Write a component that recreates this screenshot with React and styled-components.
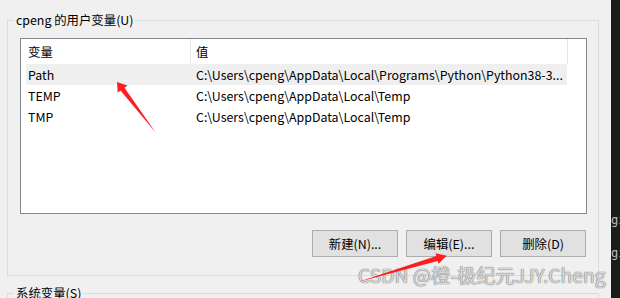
import React from 'react';
import styled, { createGlobalStyle } from 'styled-components';

const GlobalStyle = createGlobalStyle`
  html, body {
    margin: 0;
    padding: 0;
    background: #f0f0f0;
  }
  body {
    font-family: "Noto Sans CJK SC", "Noto Sans", sans-serif;
    font-size: 12.4px;
    color: #000;
  }
`;

const userVars = [
  { name: 'Path', value: 'C:\\Users\\cpeng\\AppData\\Local\\Programs\\Python\\Python38-3...', selected: true },
  { name: 'TEMP', value: 'C:\\Users\\cpeng\\AppData\\Local\\Temp' },
  { name: 'TMP', value: 'C:\\Users\\cpeng\\AppData\\Local\\Temp' },
];

const App = () => (
  <>
    <GlobalStyle />
    <Screen>
      <Dialog>
        <Group>
          <Legend>cpeng 的用户变量(U)</Legend>
          <GroupBody>
            <ListBox>
              <HeaderRow>
                <HeaderCell $first>变量</HeaderCell>
                <HeaderCell>值</HeaderCell>
              </HeaderRow>
              {userVars.map(v => (
                <Row key={v.name} $selected={v.selected}>
                  <NameCell>{v.name}</NameCell>
                  <ValueCell>{v.value}</ValueCell>
                </Row>
              ))}
            </ListBox>
            <ButtonRow>
              <Button>新建(N)...</Button>
              <Button>编辑(E)...</Button>
              <Button>删除(D)</Button>
            </ButtonRow>
          </GroupBody>
        </Group>
        <Group $second>
          <Legend>系统变量(S)</Legend>
        </Group>
      </Dialog>
      <Terminal>
        <TermLine>gi</TermLine>
        <TermLine>gi</TermLine>
      </Terminal>

      <Watermark>CSDN @橙-极纪元JJY.Cheng</Watermark>

      <Annotations width="620" height="298" viewBox="0 0 620 298">
        <polygon
          fill="#ff1e1e"
          points="117,82 127.5,85.5 124.5,87.8 156,133 120.5,90.6 117.7,92.8"
        />
        <polygon
          fill="#ff1e1e"
          points="446.7,255.7 438.5,263.8 437.7,260.9 358,282 436.3,256.1 435.5,253.2"
        />
      </Annotations>
    </Screen>
  </>
);

const Screen = styled.div`
  position: relative;
  display: flex;
  width: 620px;
  height: 298px;
  overflow: hidden;
`;

const Dialog = styled.div`
  flex: 1;
  display: flex;
  flex-direction: column;
`;

const Group = styled.fieldset`
  box-sizing: border-box;
  width: 592px;
  margin: ${props => (props.$second ? '9px' : '12px')} 0 0 7px;
  padding: 0;
  border: 1px solid #dcdcdc;
  min-width: 0;
  flex-shrink: 0;
  height: ${props => (props.$second ? '40px' : 'auto')};
`;

const Legend = styled.legend`
  margin-left: 6px;
  padding: 0 2px;
  font-size: 12.4px;
  line-height: 16px;
  color: #000;
`;

const GroupBody = styled.div`
  padding: 10px 11px 18px 12px;
`;

const ListBox = styled.div`
  box-sizing: border-box;
  height: 176px;
  border: 1px solid #828790;
  background: #fff;
`;

const HeaderRow = styled.div`
  display: flex;
  height: 25px;
`;

const HeaderCell = styled.div`
  box-sizing: border-box;
  width: ${props => (props.$first ? '170px' : '377px')};
  padding-left: ${props => (props.$first ? '7px' : '5px')};
  border-right: 1px solid #e5e5e5;
  display: flex;
  align-items: center;
  line-height: 16px;
`;

const Row = styled.div`
  display: flex;
  align-items: center;
  height: 21px;
  width: 541px;
  margin-left: 5px;
  background: ${props => (props.$selected ? '#efefef' : 'transparent')};
  white-space: nowrap;
`;

const NameCell = styled.div`
  width: 164px;
  padding-left: 2px;
  box-sizing: border-box;
`;

const ValueCell = styled.div`
  flex: 1;
  padding-left: 6px;
  overflow: hidden;
`;

const ButtonRow = styled.div`
  display: flex;
  justify-content: flex-end;
  gap: 8px;
  margin: 16px 1px 0 0;
`;

const Button = styled.button`
  box-sizing: border-box;
  width: 86px;
  height: 27px;
  padding: 0;
  background: #e1e1e1;
  border: 1px solid #adadad;
  font-family: "Noto Sans CJK SC", "Noto Sans", sans-serif;
  font-size: 12.4px;
  color: #000;
`;

const Terminal = styled.div`
  width: 9px;
  background: #1c1c1c;
  overflow: hidden;
  padding-top: 212px;
  box-sizing: border-box;
`;

const TermLine = styled.div`
  font-family: "DejaVu Sans Mono", monospace;
  font-size: 12px;
  line-height: 16px;
  color: #bdbdbd;
  margin-bottom: 17px;
  white-space: nowrap;
`;

const Watermark = styled.div`
  position: absolute;
  left: 358px;
  top: 262px;
  font-family: "Noto Sans CJK SC", "Noto Sans", sans-serif;
  font-size: 19.3px;
  line-height: 26px;
  color: rgba(235, 235, 235, 0.85);
  text-shadow: 0 0 1px #6e6e6e, 0 0 1px #6e6e6e;
  white-space: nowrap;
  pointer-events: none;
`;

const Annotations = styled.svg`
  position: absolute;
  left: 0;
  top: 0;
  pointer-events: none;
`;

export default App;
